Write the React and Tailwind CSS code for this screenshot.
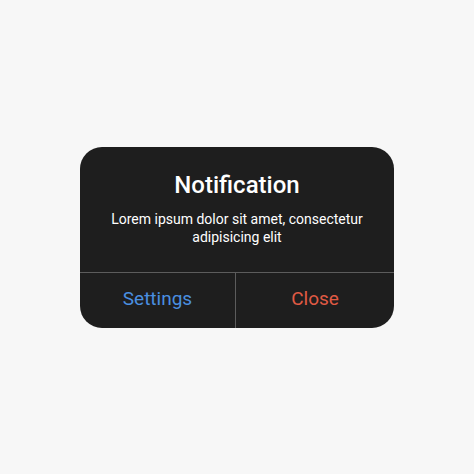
export default function App() {
  return (
    <div className="w-[474px] h-[474px] bg-[#f7f7f7] flex items-center justify-center" style={{ fontFamily: 'Roboto, "Liberation Sans", sans-serif' }}>
      <div className="w-[314px] h-[181px] bg-[#1e1e1e] rounded-[22px] flex flex-col overflow-hidden">
        <div className="h-[126px] flex flex-col items-center pt-[23px] border-b border-[#5c5c5c]">
          <div className="text-white text-[24px] font-medium leading-[30px]">Notification</div>
          <div className="text-white text-[14px] leading-[18px] text-center mt-[10px] px-4">
            Lorem ipsum dolor sit amet, consectetur<br />adipisicing elit
          </div>
        </div>
        <div className="flex-1 flex">
          <div className="w-[156px] border-r border-[#5c5c5c] flex items-center justify-center text-[#4a8fe0] text-[19px] pb-[2px]">Settings</div>
          <div className="flex-1 flex items-center justify-center text-[#e05a44] text-[19px] pb-[2px]">Close</div>
        </div>
      </div>
    </div>
  );
}
